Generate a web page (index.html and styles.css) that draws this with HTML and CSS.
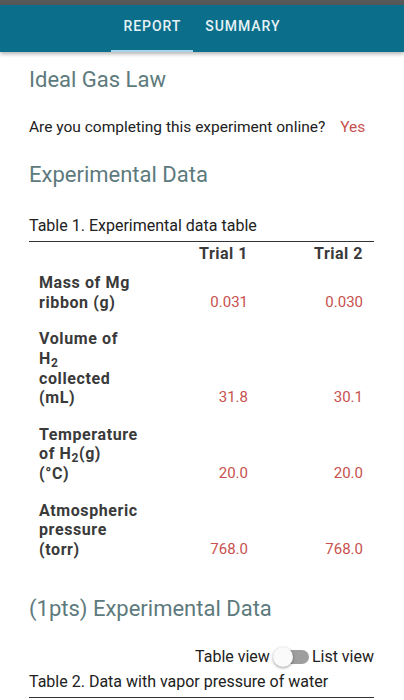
FILE: index.html
```html
<!DOCTYPE html>
<html lang="en">
<head>
<meta charset="utf-8">
<title>Ideal Gas Law</title>
<link rel="stylesheet" href="styles.css">
</head>
<body>
<div class="statusbar"></div>
<header class="appbar">
  <nav class="tabs">
    <div class="tab active">REPORT</div>
    <div class="tab">SUMMARY</div>
  </nav>
</header>
<main class="content">
  <h1 class="title">Ideal Gas Law</h1>
  <p class="question">Are you completing this experiment online? <span class="answer">Yes</span></p>
  <h2 class="section">Experimental Data</h2>
  <div class="caption">Table 1. Experimental data table</div>
  <table class="data">
    <colgroup>
      <col class="c1"><col class="c2"><col class="c3">
    </colgroup>
    <thead>
      <tr><th></th><th class="num">Trial 1</th><th class="num last">Trial 2</th></tr>
    </thead>
    <tbody>
      <tr><td class="label">Mass of Mg<br>ribbon (g)</td><td class="val">0.031</td><td class="val last">0.030</td></tr>
      <tr><td class="label">Volume of<br>H<sub>2</sub><br>collected<br>(mL)</td><td class="val">31.8</td><td class="val last">30.1</td></tr>
      <tr><td class="label">Temperature<br>of H<sub>2</sub>(g)<br>(°C)</td><td class="val">20.0</td><td class="val last">20.0</td></tr>
      <tr><td class="label">Atmospheric<br>pressure<br>(torr)</td><td class="val">768.0</td><td class="val last">768.0</td></tr>
    </tbody>
  </table>
  <h2 class="section section2">(1pts) Experimental Data</h2>
  <div class="viewtoggle">
    <span>Table view</span>
    <span class="switch"><span class="track"></span><span class="knob"></span></span>
    <span>List view</span>
  </div>
  <div class="caption caption2">Table 2. Data with vapor pressure of water</div>
</main>
</body>
</html>
```
FILE: styles.css
```css
html, body {
  margin: 0;
  padding: 0;
  background: #ffffff;
}
body {
  font-family: Roboto, "Liberation Sans", sans-serif;
  color: #212121;
  font-size: 16px;
}
.statusbar {
  height: 5px;
  background: #58595b;
}
.appbar {
  height: 47px;
  background: #0b6e8a;
  box-shadow: 0 2px 4px rgba(0, 0, 0, 0.3);
  display: flex;
  justify-content: center;
  position: relative;
}
.tabs {
  display: flex;
  height: 100%;
}
.tab {
  box-sizing: border-box;
  height: 100%;
  padding: 0 12px 6px;
  display: flex;
  align-items: center;
  font-size: 14px;
  font-weight: 500;
  letter-spacing: 0.95px;
  color: #e6f2f6;
}
.tab.active {
  border-bottom: 2px solid #a6d6ea;
  padding-bottom: 4px;
}
.content {
  padding: 0 30px 0 29px;
}
.title {
  margin: 14px 0 0;
  font-size: 22px;
  line-height: 28px;
  font-weight: 400;
  color: #5d7a7d;
}
.question {
  margin: 23px 0 0;
  line-height: 20px;
  font-size: 15.5px;
}
.answer {
  color: #c7514e;
  margin-left: 11px;
}
.section {
  margin: 24px 0 0;
  font-size: 22px;
  line-height: 28px;
  font-weight: 400;
  color: #5d7a7d;
}
.caption {
  margin-top: 27px;
  line-height: 20px;
  padding-bottom: 5px;
}
.data {
  width: 100%;
  border-collapse: collapse;
  table-layout: fixed;
  border-top: 1px solid #333333;
}
.c1 { width: 122px; }
.c2 { width: 107px; }
.data th {
  padding: 2px 10px 0;
  line-height: 20px;
  font-weight: 700;
  color: #3a3a3a;
  letter-spacing: 0.5px;
}
.data th.num { text-align: right; }
.data td {
  padding: 9px 10px 8px;
  line-height: 19.5px;
}
.data .last { padding-right: 11px; }
.label {
  font-weight: 700;
  color: #3a3a3a;
  letter-spacing: 0.6px;
  vertical-align: top;
}
.label sub {
  font-size: 12px;
  line-height: 12px;
  vertical-align: -3px;
}
.val {
  text-align: right;
  vertical-align: bottom;
  color: #c7514e;
  font-size: 15px;
}
.section2 {
  margin-top: 28px;
}
.viewtoggle {
  margin-top: 24px;
  display: flex;
  justify-content: flex-end;
  align-items: center;
  line-height: 20px;
}
.switch {
  position: relative;
  width: 36px;
  height: 20px;
  margin: 0 3px 0 3px;
}
.track {
  position: absolute;
  left: 7px;
  right: 0;
  top: 3px;
  height: 14px;
  border-radius: 7px;
  background: #9e9e9e;
}
.knob {
  position: absolute;
  left: 0;
  top: 0;
  width: 20px;
  height: 20px;
  border-radius: 50%;
  background: #fafafa;
  box-shadow: 0 1px 3px rgba(0, 0, 0, 0.4);
}
.caption2 {
  margin-top: 5px;
  border-bottom: 1px solid #333333;
}
```
